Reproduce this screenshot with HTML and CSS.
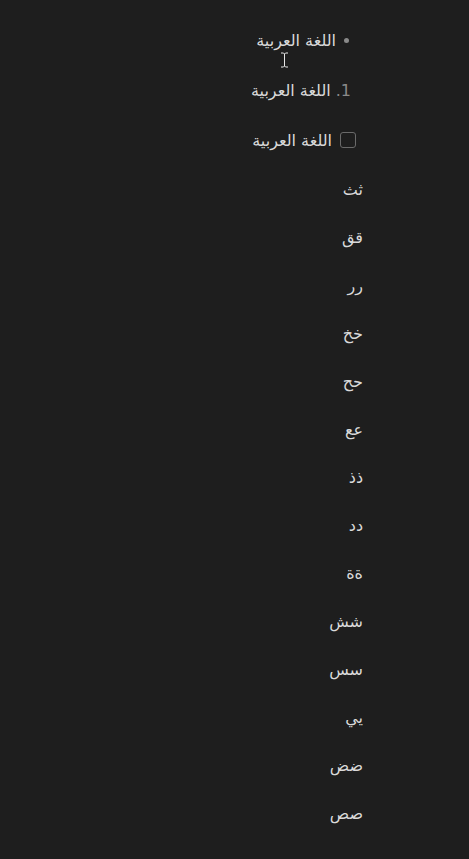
FILE: index.html
```html
<!DOCTYPE html>
<html lang="ar">
<head>
<meta charset="utf-8">
<link rel="stylesheet" href="styles.css">
</head>
<body>
<div class="editor" dir="rtl">
  <div class="line list-line bullet-line"><span class="bullet"></span><span class="txt">اللغة العربية</span></div>
  <div class="line list-line num-line"><span class="num">1.</span><span class="txt">اللغة العربية</span></div>
  <div class="line list-line task-line"><span class="box"></span><span class="txt">اللغة العربية</span></div>
  <div class="line">ثث</div>
  <div class="line">قق</div>
  <div class="line">رر</div>
  <div class="line">خخ</div>
  <div class="line">حح</div>
  <div class="line">عع</div>
  <div class="line">ذذ</div>
  <div class="line">دد</div>
  <div class="line">ةة</div>
  <div class="line">شش</div>
  <div class="line">سس</div>
  <div class="line">يي</div>
  <div class="line">ضض</div>
  <div class="line">صص</div>
</div>
<svg class="ibeam" width="9" height="16" viewBox="0 0 9 16"><path d="M1 1h2.5M5.5 1H8M4.5 1.5v13M1 15h2.5M5.5 15H8M3.5 1.5l1 .5 1-.5M3.5 14.5l1-.5 1 .5" stroke="#e8e8e8" stroke-width="1" fill="none"/></svg>
</body>
</html>
```
FILE: styles.css
```css
html, body {
  margin: 0;
  padding: 0;
  background: #1e1e1e;
  height: 100%;
}
body {
  position: relative;
  overflow: hidden;
}
.editor {
  padding: 15px 106px 0 0;
  font-family: "DejaVu Sans", "Noto Sans", sans-serif;
  font-size: 16px;
  color: #dadada;
}
.line {
  height: 48px;
  display: flex;
  align-items: center;
}
.list-line {
  height: 50px;
  gap: 8px;
}
.bullet-line { padding-right: 14px; }
.bullet {
  width: 5px;
  height: 5px;
  border-radius: 50%;
  background: #8a8a8a;
}
.num {
  color: #8a8a8a;
  margin-left: -3px;
}
.num-line { padding-right: 12px; }
.task-line { padding-right: 7px; }
.box {
  width: 14px;
  height: 14px;
  border: 1px solid #6a6a6a;
  border-radius: 3px;
}
.ibeam {
  position: absolute;
  left: 280px;
  top: 52px;
}
```
